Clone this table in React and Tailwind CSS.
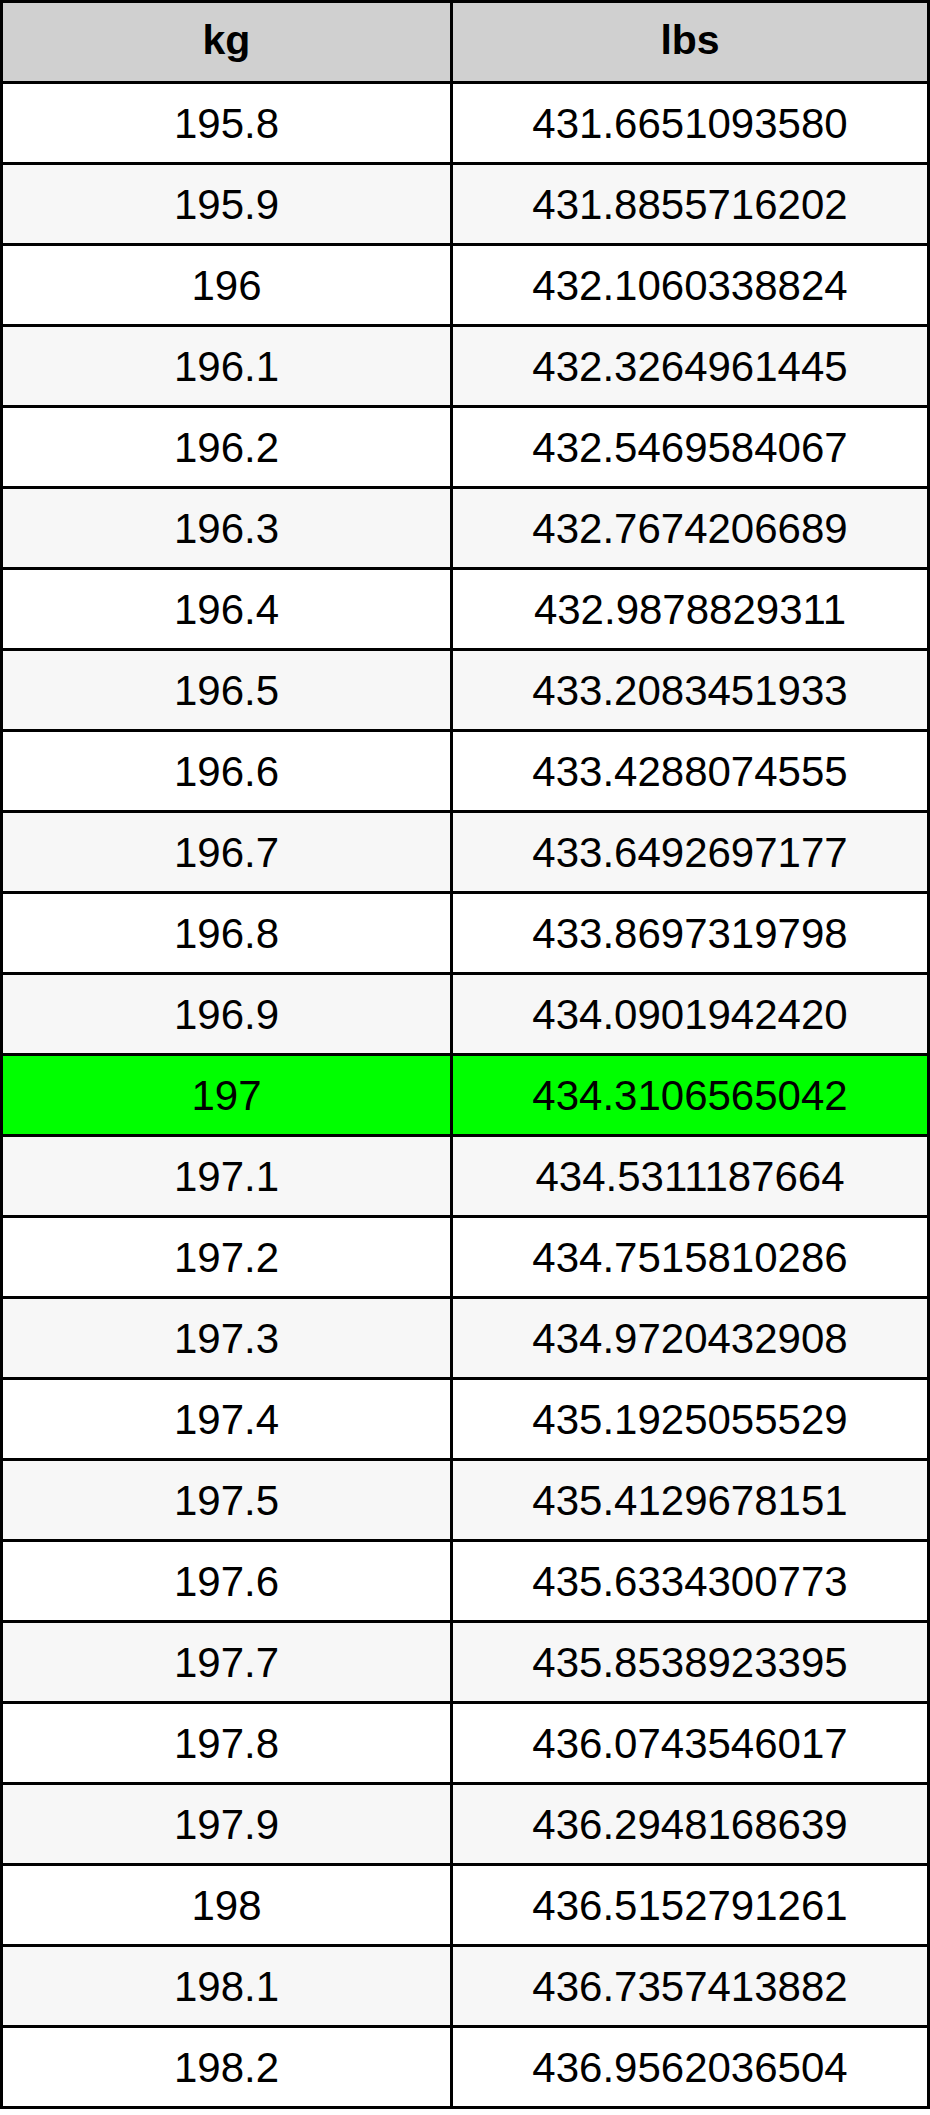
import React from "react";

const rows = [
  ["195.8", "431.6651093580"],
  ["195.9", "431.8855716202"],
  ["196", "432.1060338824"],
  ["196.1", "432.3264961445"],
  ["196.2", "432.5469584067"],
  ["196.3", "432.7674206689"],
  ["196.4", "432.9878829311"],
  ["196.5", "433.2083451933"],
  ["196.6", "433.4288074555"],
  ["196.7", "433.6492697177"],
  ["196.8", "433.8697319798"],
  ["196.9", "434.0901942420"],
  ["197", "434.3106565042"],
  ["197.1", "434.5311187664"],
  ["197.2", "434.7515810286"],
  ["197.3", "434.9720432908"],
  ["197.4", "435.1925055529"],
  ["197.5", "435.4129678151"],
  ["197.6", "435.6334300773"],
  ["197.7", "435.8538923395"],
  ["197.8", "436.0743546017"],
  ["197.9", "436.2948168639"],
  ["198", "436.5152791261"],
  ["198.1", "436.7357413882"],
  ["198.2", "436.9562036504"],
];

export default function App() {
  return (
    <div
      className="w-[930px] bg-white text-black"
      style={{ fontFamily: '"Liberation Sans", Arial, sans-serif' }}
    >
      <div className="border-[3px] border-black">
        <div className="flex h-[81px] border-b-[3px] border-black bg-[#d0d0d0] text-[41px] font-bold">
          <div className="w-[450px] border-r-[3px] border-black flex items-center justify-center pb-[2px]">kg</div>
          <div className="flex-1 flex items-center justify-center pb-[2px]">lbs</div>
        </div>
        {rows.map(([kg, lbs], i) => {
          const last = i === rows.length - 1;
          const bg = kg === "197" ? "bg-[#00ff00]" : i % 2 === 0 ? "bg-white" : "bg-[#f7f7f7]";
          return (
            <div
              key={kg}
              className={`flex text-[42px] ${bg} ${last ? "h-[78px]" : "h-[81px] border-b-[3px] border-black"}`}
            >
              <div className="w-[450px] border-r-[3px] border-black flex items-center justify-center">{kg}</div>
              <div className="flex-1 flex items-center justify-center">{lbs}</div>
            </div>
          );
        })}
      </div>
    </div>
  );
}
